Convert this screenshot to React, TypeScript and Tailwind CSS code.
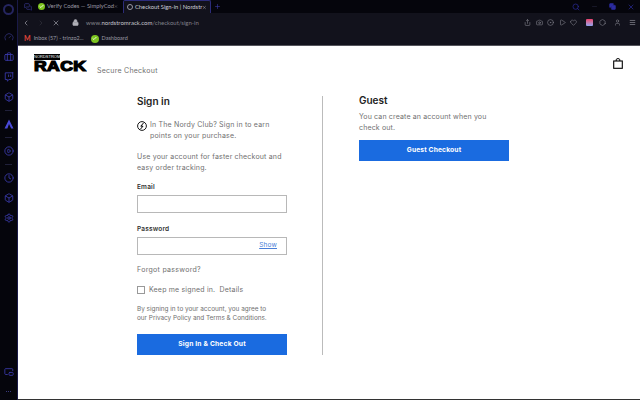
import { ChevronLeft, ChevronRight, X, Lock, Search, Minus, Copy, Plus, Gauge, Briefcase, Twitch, Box, CirclePlay, Clock, Settings, PictureInPicture2, Camera, Heart, Play, Share, CircleDot, Hexagon, User, Menu, Check, MessagesSquare } from "lucide-react";

const sans = "font-['Inter','Liberation_Sans',sans-serif]";
const chrome = "font-['Lato','Liberation_Sans',sans-serif]";

function GreenDot({ size }: { size: string }) {
    return (
        <span className={`flex ${size} shrink-0 items-center justify-center rounded-full bg-[#7cc41f]`}>
            <Check className="h-[5px] w-[5px] text-white" strokeWidth={4} />
        </span>
    );
}

function Divider() {
    return <div className="my-[-2px] h-px w-[7px] bg-[#20203a]" />;
}

function Sidebar() {
    const cls = "h-[10px] w-[10px] text-[#3c3cb0]";
    return (
        <div className="flex w-[18px] shrink-0 flex-col items-center border-r border-[#1a1a48] bg-[#05050c] pt-[4px]">
            <div className="h-[11px] w-[11px] rounded-full border-2 border-[#25255f]" />
            <div className="mt-[17px] flex flex-col items-center gap-[10px]">
                <Gauge className="h-[10px] w-[10px] text-[#2e2e70]" />
                <Briefcase className={cls} />
                <Twitch className={cls} />
                <Box className={cls} />
                <Divider />
                <svg viewBox="0 0 10 10" className="h-[10px] w-[10px] fill-[#4a4ad8]">
                    <path d="M5 0.5 9.5 9.5H7.2L5 5 3.4 9.5H0.5Z" />
                </svg>
                <Divider />
                <CirclePlay className={cls} />
                <Divider />
                <Clock className={cls} />
                <Box className={cls} />
                <Settings className={cls} />
            </div>
            <div className="mt-auto flex flex-col items-center gap-[14px] pb-[8px]">
                <PictureInPicture2 className={cls} />
                <div className="flex gap-[1px]">
                    <span className="h-px w-px bg-[#3a3a80]" />
                    <span className="h-px w-px bg-[#3a3a80]" />
                    <span className="h-px w-px bg-[#3a3a80]" />
                </div>
            </div>
        </div>
    );
}

function TabBar() {
    return (
        <div className={`flex h-[13px] items-stretch bg-[#05050c] ${chrome}`}>
            <div className="flex w-[20px] items-center justify-center">
                <MessagesSquare className="h-[8px] w-[8px] text-[#3a3a90]" />
            </div>
            <div className="flex w-[82px] items-center pr-[1px] text-[5.8px] text-[#9a9aa6]">
                <GreenDot size="h-[7px] w-[7px]" />
                <span className="ml-[2px] whitespace-nowrap">Verify Codes — SimplyCod</span>
                <X className="ml-auto mr-[1px] h-[7px] w-[7px] text-[#9a9aa6]" />
            </div>
            <div className="ml-[3px] flex w-[88px] items-center rounded-t-[2px] border-x border-t border-[#2c2c7a] bg-[#12121c] pl-[3px] text-[5.8px] text-[#d0d0d8]">
                <span className="h-[6px] w-[6px] shrink-0 rounded-full border border-[#9a9aa6]" />
                <span className="ml-[2px] whitespace-nowrap">Checkout Sign-in | Nordstr</span>
                <X className="ml-auto mr-[3px] h-[7px] w-[7px] text-[#d0d0d8]" />
            </div>
            <div className="flex w-[12px] items-center justify-center">
                <Plus className="h-[7px] w-[7px] text-[#3a3aa8]" />
            </div>
            <div className="ml-auto flex items-center gap-[11px] pr-[5px] text-[#2c2ca0]">
                <Search className="h-[8px] w-[8px]" />
                <Minus className="h-[7px] w-[7px] text-[#24243a]" />
                <Copy className="h-[7px] w-[7px] fill-[#2c2ca0]" />
                <X className="h-[8px] w-[8px]" />
            </div>
        </div>
    );
}

function Toolbar() {
    const cls = "h-[7px] w-[7px] text-[#85858f]";
    return (
        <div className={`flex h-[19px] items-center bg-[#12121c] pl-[4px] pr-[4px] ${chrome}`}>
            <ChevronLeft className="h-[8px] w-[8px] text-[#a0a0aa]" />
            <ChevronRight className="ml-[7px] h-[8px] w-[8px] text-[#33333e]" />
            <X className="ml-[7px] h-[8px] w-[8px] text-[#a0a0aa]" />
            <Lock className="ml-[12px] h-[7px] w-[7px] fill-[#b0b0b8] text-[#b0b0b8]" />
            <span className="ml-[7px] text-[6px] text-[#808088]">
                www.<span className="text-[#c4c4cc]">nordstromrack.com</span>/checkout/sign-in
            </span>
            <div className="ml-auto flex items-center">
                <Share className={cls} />
                <Camera className={`${cls} ml-[5px]`} />
                <CircleDot className={`${cls} ml-[4px]`} />
                <Play className={`${cls} ml-[5px]`} />
                <Heart className={`${cls} ml-[4px]`} />
                <div className="ml-[9px] h-[7px] w-[7px] rounded-[1px] bg-gradient-to-b from-[#e83a6a] to-[#8aa0f0]" />
                <Hexagon className={`${cls} ml-[6px]`} />
                <User className={`${cls} ml-[8px]`} />
                <Menu className="ml-[8px] h-[7px] w-[7px] text-[#a0a0aa]" />
            </div>
        </div>
    );
}

function Bookmarks() {
    return (
        <div className={`flex h-[14px] items-center border-b border-[#55555c] bg-[#12121c] pl-[6px] text-[5.5px] text-[#9a9aa4] ${chrome}`}>
            <span className="mr-[3px] text-[7px] font-bold leading-none text-[#e0453a]">M</span>
            <span>Inbox (57) - trinzo2...</span>
            <span className="ml-[7px] mr-[3px]"><GreenDot size="h-[8px] w-[8px]" /></span>
            <span>Dashboard</span>
        </div>
    );
}

function Logo() {
    return (
        <div className="flex w-[54px] flex-col font-['Liberation_Sans',sans-serif] text-black">
            <div className="h-[6px] w-[26px] overflow-hidden bg-black text-center text-[4px] leading-[6px] text-white">NORDSTROM</div>
            <div className="mt-px h-[11px] origin-left scale-x-[1.26] whitespace-nowrap text-[14px] font-bold leading-[11px] tracking-[0.3px] [-webkit-text-stroke:1.2px_black]">RACK</div>
        </div>
    );
}

function BlueButton({ label }: { label: string }) {
    return (
        <button className="flex h-[21px] w-[150px] items-center justify-center bg-[#1a6be0] text-[6.7px] font-bold text-white">
            {label}
        </button>
    );
}

function Field({ label, show }: { label: string; show?: boolean }) {
    return (
        <div>
            <div className="h-[10px] text-[6.5px] font-semibold leading-[10px] text-[#333]">{label}</div>
            <div className="mt-[3px] flex h-[18px] w-[150px] items-center justify-end border border-[#b8b8b8] pr-[9px]">
                {show && <span className="text-[6.5px] text-[#4a7fd8] underline">Show</span>}
            </div>
        </div>
    );
}

function NordyIcon() {
    return (
        <svg viewBox="0 0 10 10" className="mt-[1px] h-[10px] w-[10px] shrink-0 fill-none stroke-black">
            <circle cx="5" cy="5" r="4.4" strokeWidth="0.9" />
            <path d="M6.8 1.6 3.8 5.2H6L3.2 8.4" strokeWidth="1" />
        </svg>
    );
}

function SignIn() {
    return (
        <div className="w-[150px] text-[7px] tracking-[0.18px] text-[#707070]">
            <h2 className="h-[12px] text-[10px] font-semibold leading-[12px] tracking-normal text-[#222]">Sign in</h2>
            <div className="mt-[13px] flex gap-[3px] leading-[10.5px]">
                <NordyIcon />
                <p>In The Nordy Club? Sign in to earn<br />points on your purchase.</p>
            </div>
            <p className="mt-[11px] leading-[10.5px]">Use your account for faster checkout and<br />easy order tracking.</p>
            <div className="mt-[9px]"><Field label="Email" /></div>
            <div className="mt-[11px]"><Field label="Password" show /></div>
            <p className="mt-[10px] h-[10px] leading-[10px] tracking-[0.3px]">Forgot password?</p>
            <div className="mt-[10px] flex h-[10px] items-center gap-[4px]">
                <span className="h-[8px] w-[8px] shrink-0 border border-[#999]" />
                <span>Keep me signed in.&nbsp; Details</span>
            </div>
            <p className="mt-[10px] text-[6.4px] leading-[9px] tracking-normal">By signing in to your account, you agree to<br />our Privacy Policy and Terms &amp; Conditions.</p>
            <div className="mt-[11px]"><BlueButton label="Sign In & Check Out" /></div>
        </div>
    );
}

function Guest() {
    return (
        <div className="w-[150px] text-[7px] tracking-[0.15px] text-[#707070]">
            <h2 className="h-[12px] text-[10px] font-semibold leading-[12px] tracking-normal text-[#222]">Guest</h2>
            <p className="mt-[5px] leading-[11px]">You can create an account when you<br />check out.</p>
            <div className="mt-[7px]"><BlueButton label="Guest Checkout" /></div>
        </div>
    );
}

export default function App() {
    return (
        <div className={`flex h-[400px] w-[640px] overflow-hidden bg-white ${sans}`}>
            <Sidebar />
            <div className="flex min-w-0 flex-1 flex-col">
                <TabBar />
                <Toolbar />
                <Bookmarks />
                <div className="flex flex-1 flex-col border-b border-[#333] bg-white">
                    <div className="flex h-[49px] items-start pl-[16px] pr-[17px] pt-[8px]">
                        <Logo />
                        <span className="ml-[9px] mt-[12px] text-[7px] tracking-[0.25px] text-[#707070]">Secure Checkout</span>
                        <svg viewBox="0 0 10 11" className="ml-auto mt-[4px] h-[11px] w-[10px] fill-none stroke-black">
                            <rect x="0.7" y="3" width="8.6" height="7.3" strokeWidth="1.1" />
                            <path d="M3.2 3V1.8Q3.2 0.6 5 0.6T6.8 1.8V3" strokeWidth="1" />
                        </svg>
                    </div>
                    <div className="flex pl-[119px]">
                        <SignIn />
                        <div className="ml-[35px] mt-[1px] h-[259px] w-px bg-[#bbb]" />
                        <div className="ml-[36px] mt-[-1px]"><Guest /></div>
                    </div>
                </div>
            </div>
        </div>
    );
}
